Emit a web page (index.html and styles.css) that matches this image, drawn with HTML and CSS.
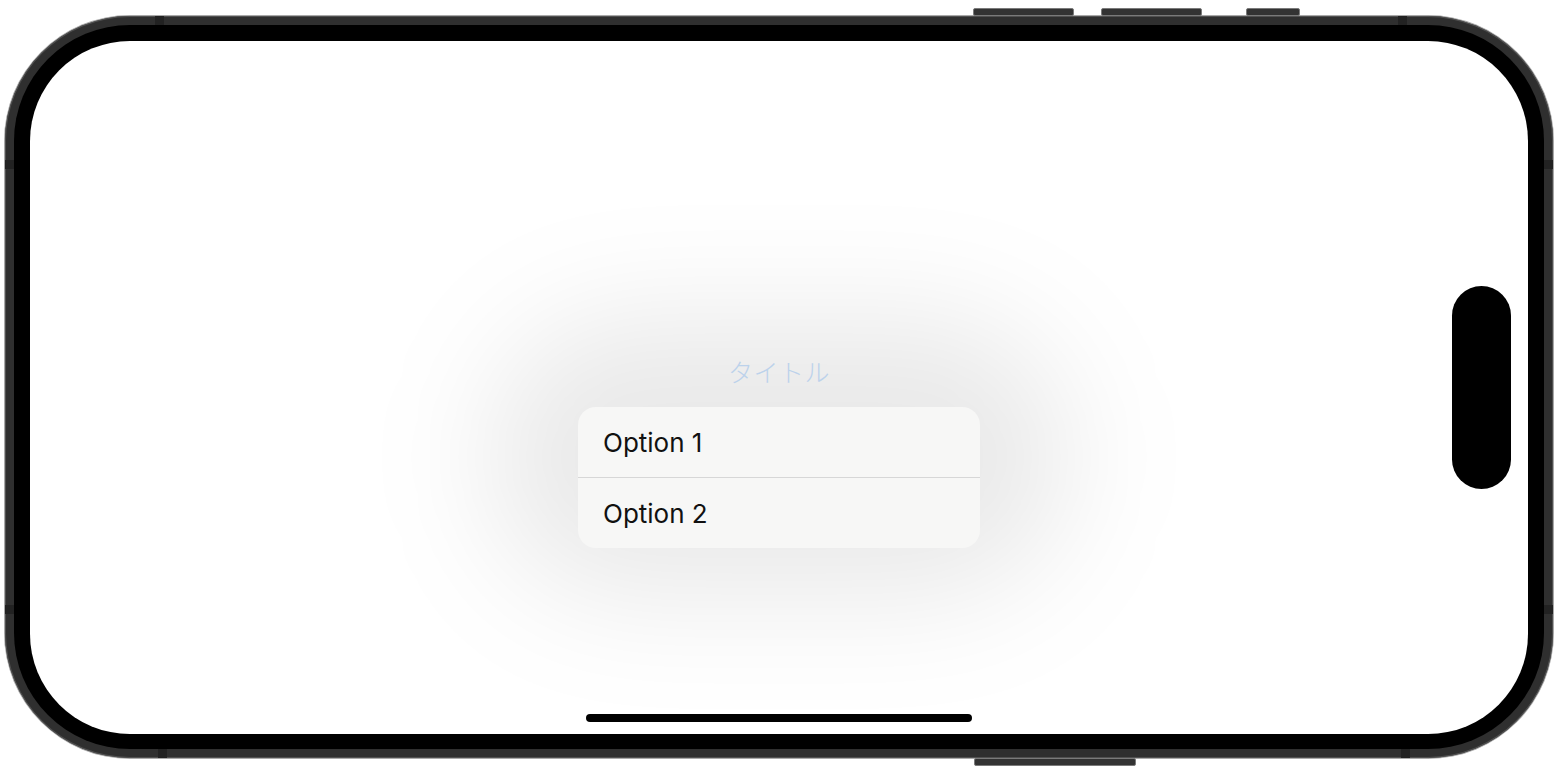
FILE: index.html
```html
<!DOCTYPE html>
<html lang="ja">
<head>
<meta charset="utf-8">
<title>タイトル</title>
<link rel="stylesheet" href="styles.css">
</head>
<body>
  <div class="device">
    <span class="side-button side-button-a"></span>
    <span class="side-button side-button-b"></span>
    <span class="side-button side-button-c"></span>
    <span class="side-button side-button-d"></span>
    <span class="band band-top-left"></span>
    <span class="band band-top-right"></span>
    <span class="band band-bottom-left"></span>
    <span class="band band-bottom-right"></span>
    <span class="band band-left-top"></span>
    <span class="band band-left-bottom"></span>
    <span class="band band-right-top"></span>
    <span class="band band-right-bottom"></span>
    <div class="bezel">
      <div class="screen">
        <div class="dialog">
          <div class="dialog-title">タイトル</div>
          <div class="dialog-card">
            <div class="dialog-option">Option 1</div>
            <div class="dialog-option">Option 2</div>
          </div>
        </div>
        <div class="island"></div>
        <div class="home-indicator"></div>
      </div>
    </div>
  </div>
</body>
</html>
```

FILE: styles.css
```css
html, body {
  margin: 0;
  padding: 0;
  background: #ffffff;
}

body {
  width: 1558px;
  height: 777px;
  overflow: hidden;
  font-family: Inter, Roboto, "Noto Sans", sans-serif;
}

/* phone body: steel rim, black bezel, screen */
.device {
  position: relative;
  box-sizing: border-box;
  width: 1548px;
  height: 742px;
  margin: 16px 0 0 5px;
  padding: 9px;
  border-radius: 125px;
  background: #2f2f2f;
  box-shadow: 0 0 0 1px #a9a9a9, inset 0 0 0 1px #505050;
}

.bezel {
  box-sizing: border-box;
  height: 100%;
  padding: 16px 16px 15px 16px;
  border-radius: 116px;
  background: #000000;
}

.screen {
  position: relative;
  height: 100%;
  border-radius: 100px;
  background: #ffffff;
  overflow: hidden;
  display: flex;
  flex-direction: column;
  align-items: center;
}

/* hardware buttons sitting on the rim */
.side-button {
  position: absolute;
  height: 8px;
  background: #333333;
  border: 1px solid #7a7a7a;
  border-radius: 2px;
  box-sizing: border-box;
}

.side-button-a { top: -8px; left: 968px; width: 101px; }
.side-button-b { top: -8px; left: 1096px; width: 101px; }
.side-button-c { top: -8px; left: 1241px; width: 54px; }
.side-button-d { bottom: -8px; left: 969px; width: 162px; }

/* antenna bands cut into the rim */
.band {
  position: absolute;
  width: 9px;
  height: 9px;
  background: #222222;
}

.band-top-left { top: 0; left: 150px; }
.band-top-right { top: 0; right: 146px; }
.band-bottom-left { bottom: 0; left: 153px; }
.band-bottom-right { bottom: 0; right: 143px; }
.band-left-top { left: 0; top: 144px; }
.band-left-bottom { left: 0; bottom: 144px; }
.band-right-top { right: 0; top: 144px; }
.band-right-bottom { right: 0; bottom: 144px; }

/* confirmation dialog */
.dialog {
  position: relative;
  margin-top: 315px;
  width: 402px;
  display: flex;
  flex-direction: column;
  align-items: center;
}

/* soft shadow cloud behind the dialog */
.dialog::before {
  content: "";
  position: absolute;
  left: -90px;
  right: -90px;
  top: -40px;
  bottom: -50px;
  border-radius: 140px;
  background: rgba(0, 0, 0, 0.085);
  filter: blur(60px);
}

.dialog-title {
  position: relative;
  font-family: "Noto Sans CJK JP", "Noto Sans", sans-serif;
  font-size: 25px;
  line-height: 30px;
  font-weight: 300;
  color: #bcd2eb;
  letter-spacing: 0.5px;
}

.dialog-card {
  position: relative;
  margin-top: 21px;
  width: 100%;
  border-radius: 18px;
  background: #f7f7f6;
  overflow: hidden;
}

.dialog-option {
  height: 70px;
  display: flex;
  align-items: center;
  padding-left: 25px;
  font-size: 26px;
  color: #111111;
}

.dialog-option + .dialog-option {
  border-top: 1px solid #d7d7d7;
}

.island {
  position: absolute;
  right: 17px;
  top: 50%;
  width: 59px;
  height: 203px;
  margin-top: -102px;
  border-radius: 30px;
  background: #000000;
}

.home-indicator {
  position: absolute;
  bottom: 12px;
  left: 50%;
  width: 386px;
  height: 8px;
  margin-left: -193px;
  border-radius: 4px;
  background: #000000;
}
```
